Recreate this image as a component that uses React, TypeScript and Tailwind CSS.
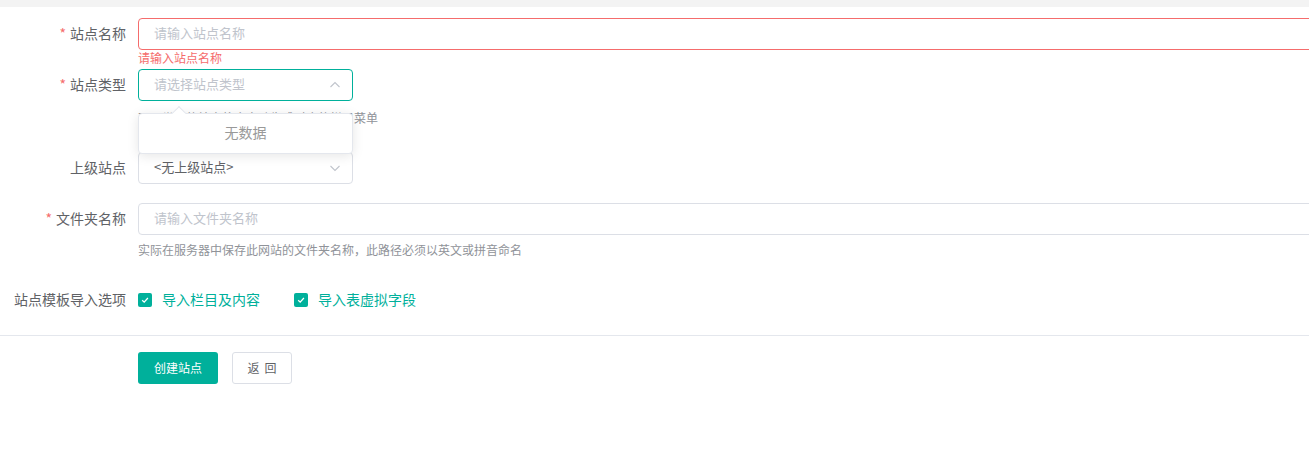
import React from "react";

const font = { fontFamily: '"Noto Sans CJK SC", "Noto Sans", sans-serif' };

function ChevronUp() {
  return (
    <svg width="12" height="12" viewBox="0 0 12 12" fill="none">
      <path d="M1.5 8 L6 3.5 L10.5 8" stroke="#c0c4cc" strokeWidth="1.1" />
    </svg>
  );
}

function ChevronDown() {
  return (
    <svg width="12" height="12" viewBox="0 0 12 12" fill="none">
      <path d="M1.5 4 L6 8.5 L10.5 4" stroke="#c0c4cc" strokeWidth="1.1" />
    </svg>
  );
}

function Check() {
  return (
    <span className="flex h-[14px] w-[14px] items-center justify-center rounded-[2px] bg-[#00b09b]">
      <svg width="10" height="10" viewBox="0 0 10 10" fill="none">
        <path d="M2.2 5.2 L4.2 7.1 L7.9 3" stroke="#fff" strokeWidth="1.3" />
      </svg>
    </span>
  );
}

function Label({ text, required }: { text: string; required?: boolean }) {
  return (
    <div className="w-[138px] shrink-0 pr-3 text-right text-[14px] leading-[31px] text-[#606266]">
      {required && <span className="mr-1 text-[#f56c6c]">*</span>}
      {text}
    </div>
  );
}

export default function App() {
  return (
    <div className="h-[462px] w-full overflow-hidden bg-white" style={font}>
      <div className="h-[7px] bg-[#f3f3f3]" />
      <div className="pt-[11px]">
        {/* Row 1 */}
        <div className="flex">
          <Label text="站点名称" required />
          <div className="-mr-[20px] h-[32px] flex-1 rounded-[4px] border border-[#f56c6c] px-[15px] text-[13px] leading-[28px] text-[#c0c4cc]">
            请输入站点名称
          </div>
        </div>
        <div className="ml-[138px] h-[19px] pt-[1px] text-[12px] leading-[14px] text-[#f56c6c]">
          请输入站点名称
        </div>

        {/* Row 2 */}
        <div className="flex">
          <Label text="站点类型" required />
          <div className="relative w-[215px]">
            <div className="flex h-[32px] items-center justify-between rounded-[4px] border border-[#00b09b] pl-[15px] pr-[11px] text-[13px] text-[#c0c4cc]">
              <span className="-mt-[2px]">请选择站点类型</span>
              <ChevronUp />
            </div>
            <div className="mt-[9px] whitespace-nowrap text-[12px] leading-[16px] text-[#909399]">
              不同类型的站点将会自动生成对应的栏目菜单
            </div>
            {/* dropdown popup */}
            <div className="absolute left-0 top-[44px] z-10 w-[215px]">
              <div className="absolute -top-[5px] left-[36px] h-[10px] w-[10px] rotate-45 border-l border-t border-[#e4e7ed] bg-white" />
              <div className="flex h-[41px] items-center justify-center rounded-[4px] border border-[#e4e7ed] bg-white text-[14px] text-[#999999] shadow-[0_2px_12px_0_rgba(0,0,0,0.1)]">
                <span className="relative -mt-[2px]">无数据</span>
              </div>
            </div>
          </div>
        </div>

        {/* Row 3 */}
        <div className="mt-[26px] flex">
          <Label text="上级站点" />
          <div className="flex h-[32px] w-[215px] items-center justify-between rounded-[4px] border border-[#dcdfe6] pl-[15px] pr-[11px] text-[13px] text-[#606266]">
            <span className="-mt-[2px]">&lt;无上级站点&gt;</span>
            <ChevronDown />
          </div>
        </div>

        {/* Row 4 */}
        <div className="mt-[19px] flex">
          <Label text="文件夹名称" required />
          <div className="-mr-[20px] flex-1">
            <div className="h-[32px] rounded-[4px] border border-[#dcdfe6] px-[15px] text-[13px] leading-[28px] text-[#c0c4cc]">
              请输入文件夹名称
            </div>
            <div className="mt-[7px] text-[12px] leading-[16px] text-[#909399]">
              实际在服务器中保存此网站的文件夹名称，此路径必须以英文或拼音命名
            </div>
          </div>
        </div>

        {/* Row 5 */}
        <div className="mt-[26px] flex">
          <Label text="站点模板导入选项" />
          <div className="flex h-[31px] items-center text-[14px] text-[#00b09b]">
            <Check />
            <span className="ml-[10px] mr-[34px]">导入栏目及内容</span>
            <Check />
            <span className="ml-[10px]">导入表虚拟字段</span>
          </div>
        </div>

        <div className="mt-[20px] h-px bg-[#e4e7ed]" />

        <div className="mt-[16px] flex pl-[138px]">
          <button className="h-[32px] w-[80px] rounded-[3px] bg-[#00b09b] text-[12px] text-white">
            创建站点
          </button>
          <button className="ml-[14px] flex h-[32px] w-[60px] items-center justify-center gap-[5px] rounded-[3px] border border-[#dcdfe6] bg-white text-[12px] text-[#606266]">
            <span>返</span>
            <span>回</span>
          </button>
        </div>
      </div>
    </div>
  );
}
